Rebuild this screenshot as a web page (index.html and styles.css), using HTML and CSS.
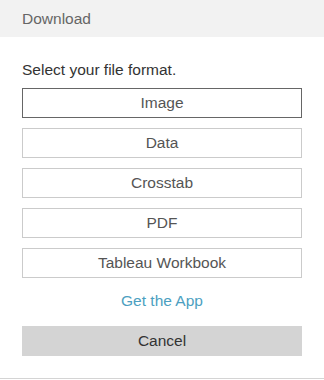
FILE: index.html
```html
<!DOCTYPE html>
<html>
<head>
<meta charset="utf-8">
<link rel="stylesheet" href="styles.css">
</head>
<body>
<div class="dialog">
  <div class="header">Download</div>
  <div class="content">
    <div class="prompt">Select your file format.</div>
    <div class="options">
      <button class="opt selected">Image</button>
      <button class="opt">Data</button>
      <button class="opt">Crosstab</button>
      <button class="opt">PDF</button>
      <button class="opt">Tableau Workbook</button>
    </div>
    <a class="app-link">Get the App</a>
    <button class="cancel">Cancel</button>
  </div>
</div>
</body>
</html>
```
FILE: styles.css
```css
html, body {
  margin: 0;
  padding: 0;
  background: #fff;
}
body {
  font-family: "Liberation Sans", Arial, sans-serif;
  width: 324px;
  height: 380px;
  overflow: hidden;
}
.dialog {
  height: 379px;
  border-bottom: 1px solid #d4d4d4;
  box-sizing: border-box;
}
.header {
  height: 37px;
  background: #f2f2f2;
  color: #666;
  font-size: 15.5px;
  line-height: 37px;
  padding-left: 22px;
}
.content {
  padding: 24px 22px 0 22px;
  display: flex;
  flex-direction: column;
}
.prompt {
  color: #333;
  font-size: 15.5px;
  line-height: 18px;
  height: 27px;
}
.options {
  display: flex;
  flex-direction: column;
  gap: 10px;
}
.opt {
  width: 280px;
  height: 30px;
  box-sizing: border-box;
  background: #fff;
  border: 1px solid #cbcbcb;
  font-family: inherit;
  font-size: 15.5px;
  color: #555;
  padding: 0;
  margin: 0;
}
.opt.selected {
  border-color: #666;
}
.app-link {
  display: block;
  text-align: center;
  width: 280px;
  color: #4c9fc1;
  font-size: 15.5px;
  line-height: 18px;
  margin-top: 14px;
  height: 34px;
}
.cancel {
  width: 280px;
  height: 30px;
  box-sizing: border-box;
  background: #d4d4d4;
  border: none;
  font-family: inherit;
  font-size: 15.5px;
  color: #333;
  padding: 0;
  margin: 0;
}
```
